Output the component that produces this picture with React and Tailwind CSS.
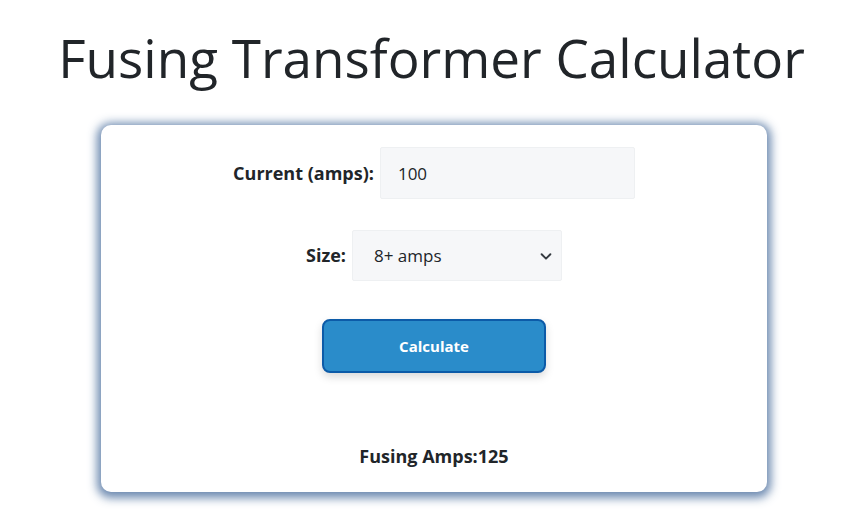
import { useState } from 'react'

export default function App() {
    const [current, setCurrent] = useState('100')
    const [size, setSize] = useState('8')
    const [result, setResult] = useState(125)

    const calculate = () => {
        const amps = parseFloat(current) || 0
        setResult(Math.round(amps * (size === '8' ? 1.25 : 1.5)))
    }

    return (
        <div className="min-h-screen bg-white font-['Open_Sans',sans-serif] text-[#212529]">
            <h1 className="pt-[20px] text-center text-[53px] leading-[76px] font-normal">
                Fusing Transformer Calculator
            </h1>

            <div className="ml-[101px] mt-[29px] flex h-[367px] w-[666px] flex-col items-center rounded-[10px] bg-white pt-[22px] shadow-[0_2px_10px_4px_rgba(84,118,162,0.85)]">
                <div className="flex items-center gap-[6px]">
                    <label className="text-[18px] font-bold">Current (amps):</label>
                    <input
                        type="text"
                        value={current}
                        onChange={(e) => setCurrent(e.target.value)}
                        className="h-[52px] w-[255px] rounded-[2px] border border-[#eef0f2] bg-[#f6f7f9] px-[17px] text-[17px] outline-none"
                    />
                </div>

                <div className="mt-[31px] flex items-center gap-[6px]">
                    <label className="text-[18px] font-bold">Size:</label>
                    <div className="relative">
                        <select
                            value={size}
                            onChange={(e) => setSize(e.target.value)}
                            className="h-[51px] w-[210px] appearance-none rounded-[2px] border border-[#eef0f2] bg-[#f6f7f9] pl-[21px] text-[17px] outline-none"
                        >
                            <option value="8">8+ amps</option>
                            <option value="7">Under 8 amps</option>
                        </select>
                        <svg
                            className="pointer-events-none absolute right-[9px] top-[19px]"
                            width="14"
                            height="14"
                            viewBox="0 0 16 16"
                            fill="none"
                            stroke="#343a40"
                            strokeWidth="2.2"
                            strokeLinecap="round"
                            strokeLinejoin="round"
                        >
                            <path d="M3 6l5 5 5-5" />
                        </svg>
                    </div>
                </div>

                <button
                    onClick={calculate}
                    className="mt-[38px] h-[54px] w-[224px] rounded-[8px] border-2 border-[#0c5ba8] bg-[#2a8cca] text-[15px] font-bold text-white shadow-[0_4px_8px_rgba(0,0,0,0.15)]"
                >
                    Calculate
                </button>

                <p className="mt-[70px] text-[18px] font-bold">Fusing Amps:{result}</p>
            </div>
        </div>
    )
}
